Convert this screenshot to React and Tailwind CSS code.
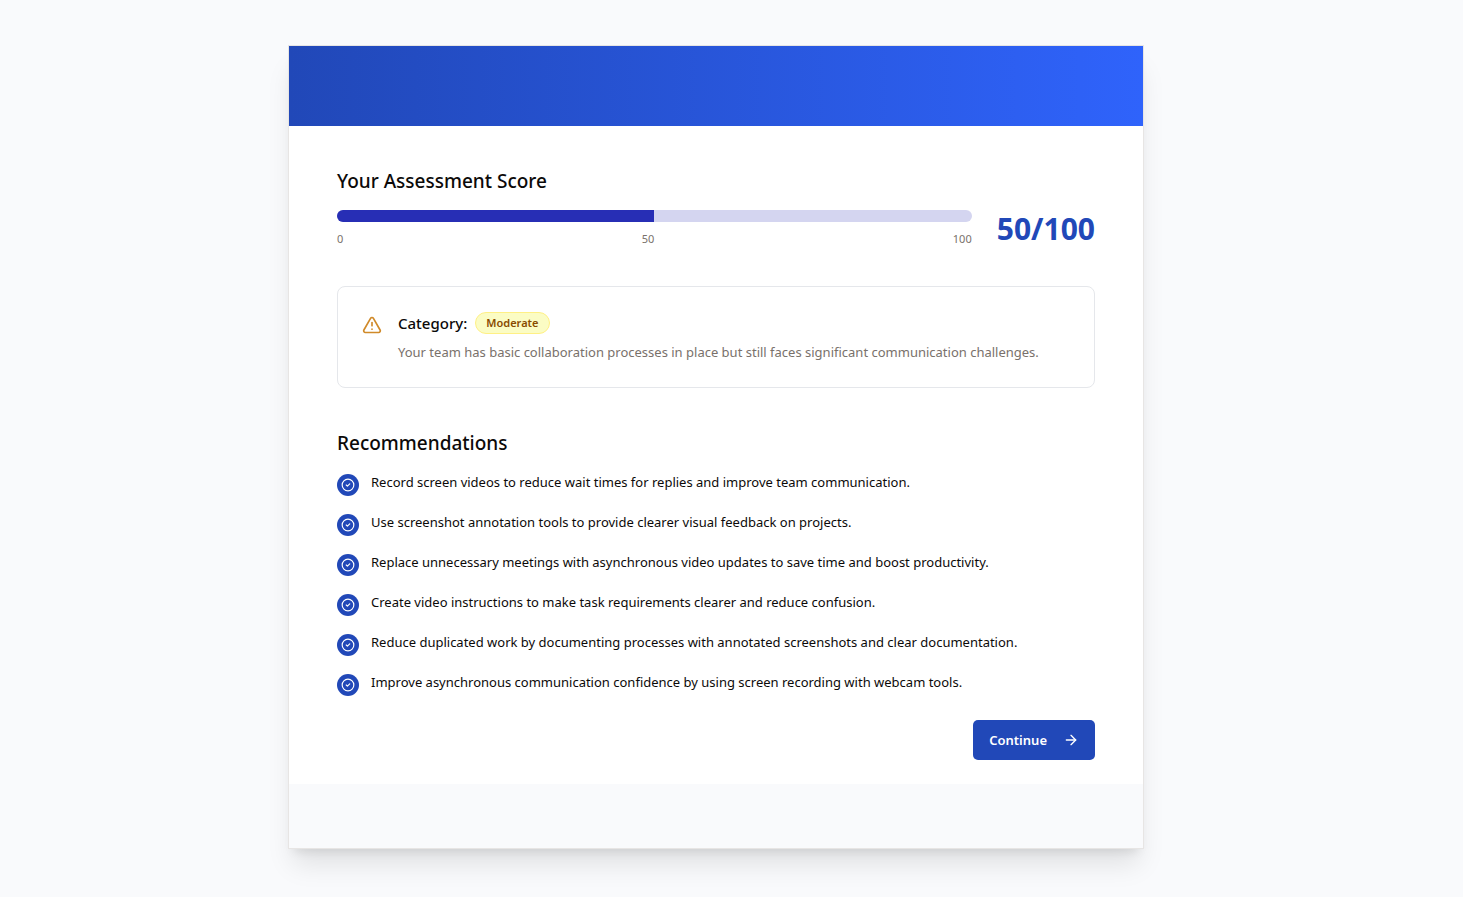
import { ArrowRight, CircleCheck, TriangleAlert } from "lucide-react";

const score = 50;

const recommendations = [
  "Record screen videos to reduce wait times for replies and improve team communication.",
  "Use screenshot annotation tools to provide clearer visual feedback on projects.",
  "Replace unnecessary meetings with asynchronous video updates to save time and boost productivity.",
  "Create video instructions to make task requirements clearer and reduce confusion.",
  "Reduce duplicated work by documenting processes with annotated screenshots and clear documentation.",
  "Improve asynchronous communication confidence by using screen recording with webcam tools.",
];

function ScoreSection() {
  return (
    <section>
      <h2 className="text-[19px] leading-[30px] font-medium">Your Assessment Score</h2>
      <div className="mt-3.5 flex items-center gap-[25px]">
        <div className="flex-1">
          <div
            role="progressbar"
            aria-label="Assessment score"
            aria-valuenow={score}
            aria-valuemin={0}
            aria-valuemax={100}
            className="h-3 overflow-hidden rounded-full bg-[#d4d5f0]"
          >
            <div className="h-full bg-[#272eb5]" style={{ width: `${score}%` }} />
          </div>
          <div className="mt-2 flex justify-between text-[11px] leading-[18px] text-[#79716b]">
            <span>0</span>
            <span>50</span>
            <span>100</span>
          </div>
        </div>
        <p className="text-[30px] leading-9 font-bold text-[#2148b8]">{score}/100</p>
      </div>
    </section>
  );
}

function CategoryCard() {
  return (
    <section className="mt-[38px] flex gap-4 rounded-lg border border-gray-200 p-6">
      <TriangleAlert className="mt-1 size-5 shrink-0 text-[#d08a2a]" />
      <div>
        <div className="flex items-center gap-2">
          <h3 className="text-[15px] leading-6 font-medium">Category:</h3>
          <span className="rounded-full border border-[#fff085] bg-[#fbfcc4] px-2.5 text-[11px] leading-5 font-semibold text-[#894b00]">
            Moderate
          </span>
        </div>
        <p className="mt-1.5 text-[13px] leading-[22px] text-[#79716b]">
          Your team has basic collaboration processes in place but still faces significant
          communication challenges.
        </p>
      </div>
    </section>
  );
}

function Recommendations() {
  return (
    <section className="mt-10">
      <h2 className="text-[19px] leading-[30px] font-medium">Recommendations</h2>
      <ul className="mt-3 flex flex-col gap-3.5">
        {recommendations.map((text) => (
          <li key={text} className="flex gap-3 text-[13px] leading-6">
            <span className="mt-1 flex size-[22px] shrink-0 items-center justify-center rounded-full bg-[#2148b8] text-white">
              <CircleCheck className="size-3.5" />
            </span>
            <span>{text}</span>
          </li>
        ))}
      </ul>
    </section>
  );
}

export default function App() {
  return (
    <main className="min-h-screen bg-[#f9fafc] py-[45px] pr-[31px] font-['Noto_Sans',sans-serif] text-[#0c0a09]">
      <div className="mx-auto w-full max-w-[856px] border border-[#e7e5e4] bg-white shadow-xl">
        <div className="h-20 bg-linear-to-r/srgb from-[#2148b8] to-[#2f63fb]" />
        <div className="px-12 pt-10 pb-6">
          <ScoreSection />
          <CategoryCard />
          <Recommendations />
          <div className="mt-6 flex justify-end">
            <button
              type="button"
              className="flex h-10 items-center gap-4 rounded-[5px] bg-[#2148b8] px-4 text-[13px] leading-5 font-semibold text-white"
            >
              Continue
              <ArrowRight className="size-4" />
            </button>
          </div>
        </div>
        <div className="h-16 bg-[#f9fafc]" />
      </div>
    </main>
  );
}
